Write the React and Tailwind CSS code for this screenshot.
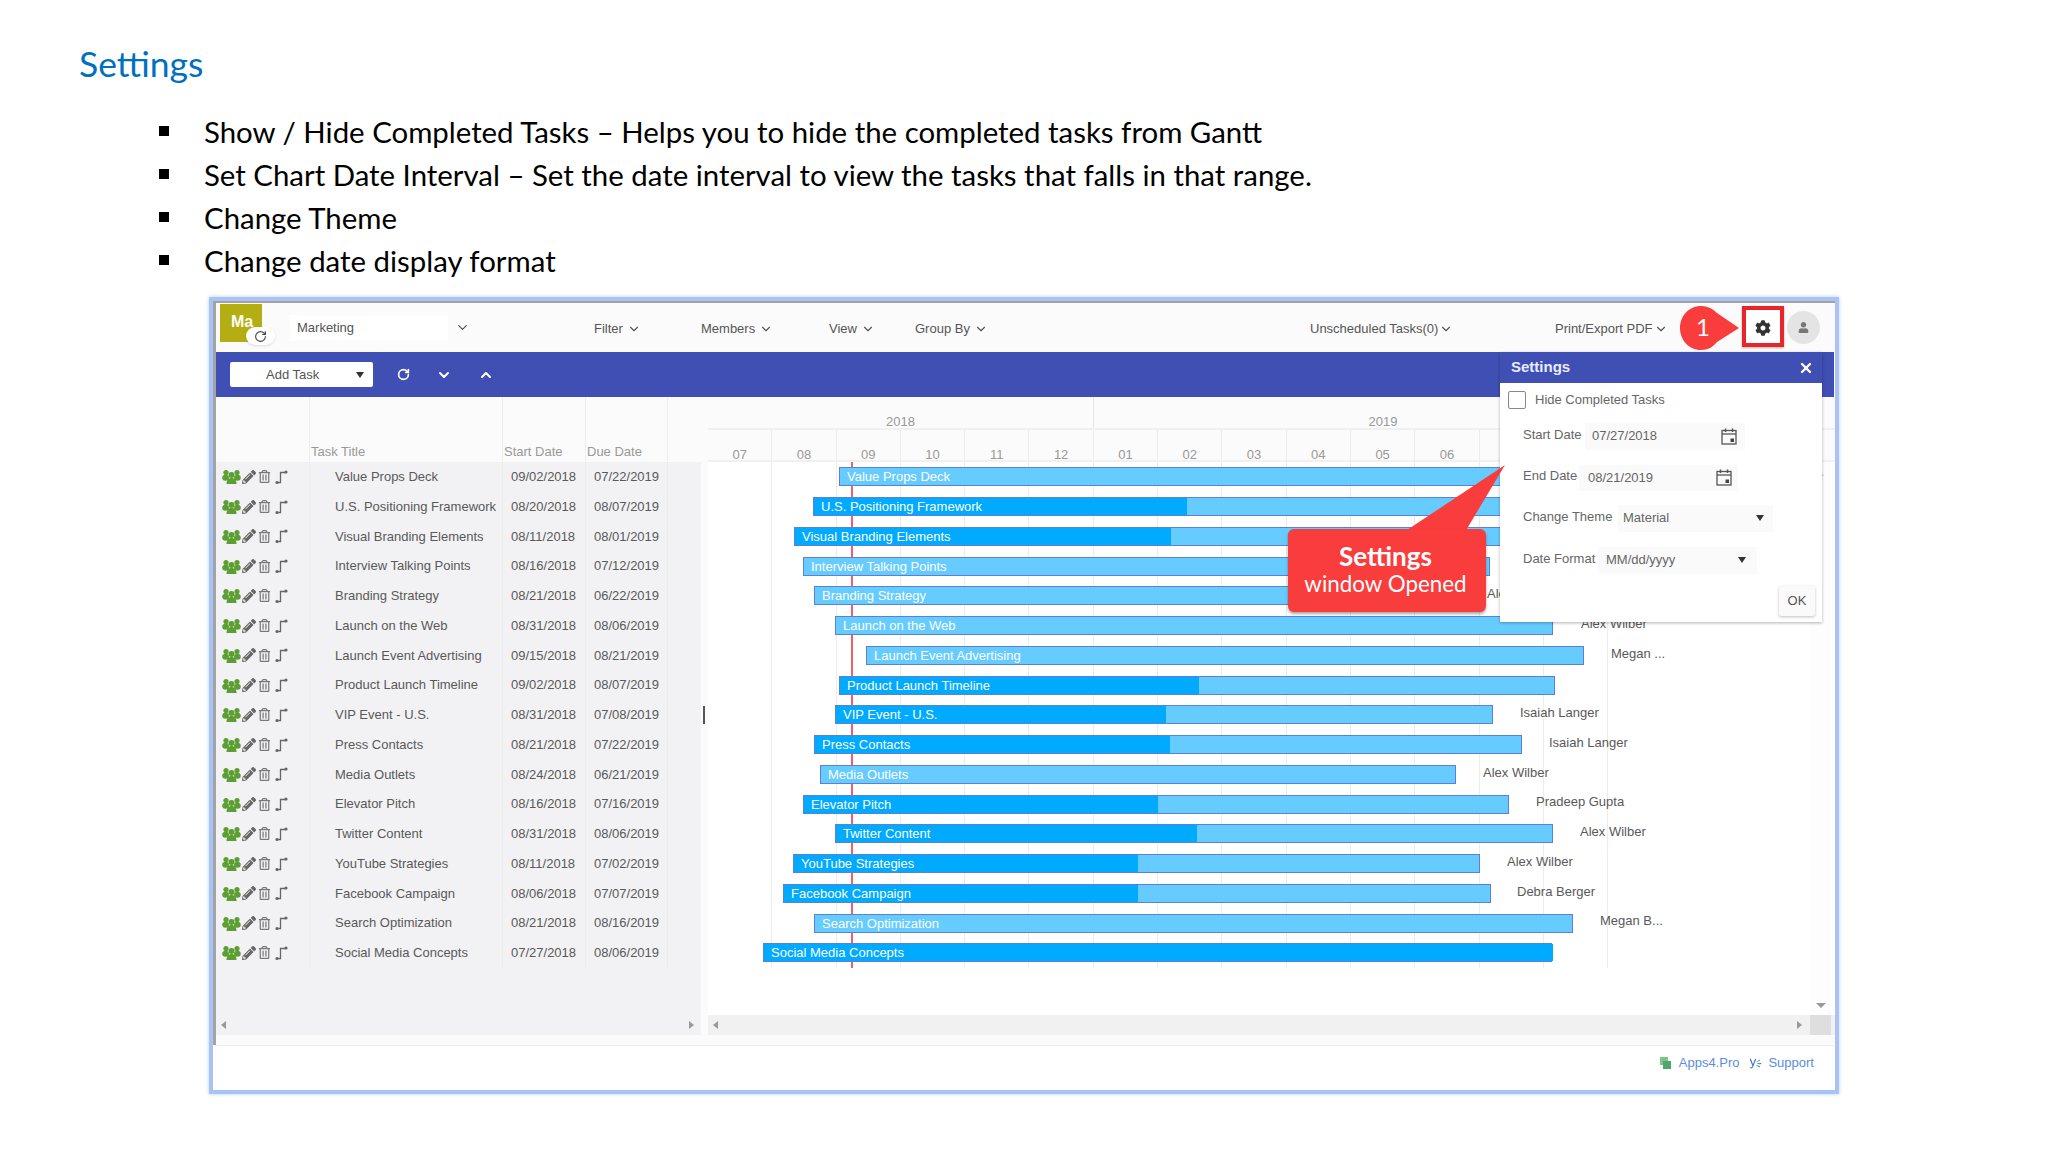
import { ChevronDown, ChevronUp, RotateCw, X } from 'lucide-react'
import { FaPencilAlt, FaRegTrashAlt, FaCog, FaUser, FaYammer } from 'react-icons/fa'

const bullets = [
  'Show / Hide Completed Tasks – Helps you to hide the completed tasks from Gantt',
  'Set Chart Date Interval – Set the date interval to view the tasks that falls in that range.',
  'Change Theme',
  'Change date display format',
]

// x values are page pixels, converted to chart offsets when rendered
const tasks = [
  { title: 'Value Props Deck', start: '09/02/2018', due: '07/22/2019', x: 839, end: 1520 },
  { title: 'U.S. Positioning Framework', start: '08/20/2018', due: '08/07/2019', x: 813, end: 1553, done: 1186 },
  { title: 'Visual Branding Elements', start: '08/11/2018', due: '08/01/2019', x: 794, end: 1536, done: 1170 },
  { title: 'Interview Talking Points', start: '08/16/2018', due: '07/12/2019', x: 803, end: 1490 },
  { title: 'Branding Strategy', start: '08/21/2018', due: '06/22/2019', x: 814, end: 1470, name: 'Alex Wilber', nameX: 1487 },
  { title: 'Launch on the Web', start: '08/31/2018', due: '08/06/2019', x: 835, end: 1553, name: 'Alex Wilber', nameX: 1581 },
  { title: 'Launch Event Advertising', start: '09/15/2018', due: '08/21/2019', x: 866, end: 1584, name: 'Megan ...', nameX: 1611 },
  { title: 'Product Launch Timeline', start: '09/02/2018', due: '08/07/2019', x: 839, end: 1555, done: 1198 },
  { title: 'VIP Event - U.S.', start: '08/31/2018', due: '07/08/2019', x: 835, end: 1493, done: 1165, name: 'Isaiah Langer', nameX: 1520 },
  { title: 'Press Contacts', start: '08/21/2018', due: '07/22/2019', x: 814, end: 1522, done: 1169, name: 'Isaiah Langer', nameX: 1549 },
  { title: 'Media Outlets', start: '08/24/2018', due: '06/21/2019', x: 820, end: 1456, name: 'Alex Wilber', nameX: 1483 },
  { title: 'Elevator Pitch', start: '08/16/2018', due: '07/16/2019', x: 803, end: 1509, done: 1157, name: 'Pradeep Gupta', nameX: 1536 },
  { title: 'Twitter Content', start: '08/31/2018', due: '08/06/2019', x: 835, end: 1553, done: 1196, name: 'Alex Wilber', nameX: 1580 },
  { title: 'YouTube Strategies', start: '08/11/2018', due: '07/02/2019', x: 793, end: 1480, done: 1137, name: 'Alex Wilber', nameX: 1507 },
  { title: 'Facebook Campaign', start: '08/06/2018', due: '07/07/2019', x: 783, end: 1491, done: 1137, name: 'Debra Berger', nameX: 1517 },
  { title: 'Search Optimization', start: '08/21/2018', due: '08/16/2019', x: 814, end: 1573, name: 'Megan B...', nameX: 1600 },
  { title: 'Social Media Concepts', start: '07/27/2018', due: '08/06/2019', x: 763, end: 1552, done: 1552 },
]

const months = ['07', '08', '09', '10', '11', '12', '01', '02', '03', '04', '05', '06', '07', '08', '09']
const chartLeft = 708

function Menu({ label, w, gap = 'gap-1' }) {
  return (
    <div className={`flex items-center mt-[3px] text-[13px] text-[#555] ${gap} ${w}`}>
      {label} <ChevronDown size={14} strokeWidth={2} />
    </div>
  )
}

function PeopleIcon() {
  return (
    <svg width="19" height="15" viewBox="0 0 19 15" fill="#5c9e31" className="shrink-0">
      <circle cx="4" cy="3.5" r="2.6" />
      <circle cx="15" cy="3.5" r="2.6" />
      <ellipse cx="3.6" cy="8.8" rx="3.4" ry="3" />
      <ellipse cx="15.4" cy="8.8" rx="3.4" ry="3" />
      <circle cx="9.5" cy="6" r="3" />
      <path d="M4.5 15C4.5 11 6.5 9 9.5 9S14.5 11 14.5 15Z" />
    </svg>
  )
}

function RouteIcon() {
  return (
    <svg width="13" height="16" viewBox="0 0 13 16" className="shrink-0">
      <circle cx="2" cy="13.5" r="1.6" fill="#666" />
      <path d="M2 13.5H5.5V3.5H11" fill="none" stroke="#666" strokeWidth="1.3" />
      <circle cx="11" cy="3" r="1.6" fill="#666" />
    </svg>
  )
}

function CalendarIcon() {
  return (
    <svg width="16" height="17" viewBox="0 0 16 17" className="shrink-0">
      <rect x="1" y="2.5" width="14" height="13.5" fill="none" stroke="#555" strokeWidth="1.3" />
      <path d="M1 6H15" stroke="#555" strokeWidth="1.3" />
      <path d="M4.5 0.5V4M11.5 0.5V4" stroke="#555" strokeWidth="1.5" />
      <rect x="9.5" y="10.5" width="3.5" height="3.5" fill="#444" />
    </svg>
  )
}

function Field({ label, labelW, box, children }) {
  return (
    <div className={`flex items-center pl-[23px] ${box.mt}`}>
      <div className={`text-[13px] text-[#666] mb-[3px] ${labelW}`}>{label}</div>
      <div className={`flex items-center justify-between bg-[#fafafa] text-[13px] text-[#666] ${box.cls}`}>{children}</div>
    </div>
  )
}

function Caret() {
  return <div className="w-0 h-0 border-x-[4px] border-x-transparent border-t-[6px] border-t-[#333]" />
}

export default function App() {
  return (
    <div className="w-[2048px] h-[1152px] bg-white overflow-hidden font-['Liberation_Sans',Arial,sans-serif]">
      <h1 className="pl-[79px] pt-[44px] text-[35.5px] leading-[40px] text-[#0070c0] font-[Lato,sans-serif]">Settings</h1>
      <ul className="mt-[26px] font-[Lato,sans-serif] text-[29.4px] leading-[43px] text-black">
        {bullets.map((b) => (
          <li key={b} className="flex items-center pl-[159px]">
            <span className="w-[10px] h-[10px] bg-black mr-[35px] mb-[2px]" />
            {b}
          </li>
        ))}
      </ul>

      <div className="relative mt-[15px] ml-[209px] w-[1630px] h-[797px] border-[4px] border-[#a9c4f4] shadow-[0_0_4px_#b9cff7] bg-white">
        <div className="h-[744px] border-t-2 border-l-[3px] border-[#a3a3a3] bg-[#fbfbfb] flex flex-col">
          {/* top menu */}
          <div className="h-[49px] flex items-center shrink-0">
            <div className="relative ml-[4px] mb-[9px] w-[42px] h-[38px] bg-[#b5ae12] text-white font-bold text-[16px] pl-[11px] pt-[8px] leading-[20px]">
              Ma
              <div className="absolute left-[26px] top-[23px] w-[29px] h-[18px] rounded-full bg-white shadow flex items-center justify-center text-[#444]">
                <RotateCw size={13} />
              </div>
            </div>
            <div className="ml-[28px] mt-[1px] w-[158px] h-[26px] bg-white pl-[7px] text-[13px] leading-[26px] text-[#555]">Marketing</div>
            <ChevronDown size={15} strokeWidth={2} className="ml-[7px] mb-[1px] text-[#555]" />
            <div className="w-[124px]" />
            <Menu label="Filter" w="w-[107px]" />
            <Menu label="Members" w="w-[128px]" />
            <Menu label="View" w="w-[86px]" />
            <Menu label="Group By" w="w-[395px]" />
            <Menu label="Unscheduled Tasks(0)" w="w-[245px]" gap="gap-[1px]" />
            <Menu label="Print/Export PDF" w="w-[187px]" gap="gap-[1px]" />
            <div className="w-[42px] h-[41px] bg-white flex items-center justify-center text-[#333]">
              <FaCog size={16} />
            </div>
            <div className="ml-[3px] w-[33px] h-[33px] rounded-full bg-[#e4e4e4] flex items-center justify-center text-[#777]">
              <FaUser size={11} />
            </div>
          </div>

          {/* blue toolbar */}
          <div className="h-[45px] mr-[1px] shrink-0 bg-[#3f4fb3] flex items-center pl-[14px] text-white">
            <div className="w-[143px] h-[25px] bg-white rounded-[2px] flex items-center text-[13px] text-[#555]">
              <span className="ml-[36px] w-[90px]">Add Task</span>
              <Caret />
            </div>
            <RotateCw size={13} strokeWidth={3} className="ml-[24px]" />
            <ChevronDown size={16} strokeWidth={3} className="ml-[26px]" />
            <ChevronUp size={16} strokeWidth={3} className="ml-[26px]" />
          </div>

          <div className="flex h-[638px] shrink-0">
            {/* task table */}
            <div className="w-[485px] flex flex-col shrink-0 text-[13px]">
              <div className="h-[65px] flex items-end pb-[1px] text-[#999]">
                <div className="w-[94px] h-full border-r border-[#eee]" />
                <div className="w-[193px] h-full border-r border-[#eee] flex items-end pl-px">Task Title</div>
                <div className="w-[83px] h-full border-r border-[#eee] flex items-end pl-px">Start Date</div>
                <div className="w-[82px] h-full border-r border-[#eee] flex items-end pl-px">Due Date</div>
              </div>
              <div className="flex-1 bg-[#f2f2f4] flex flex-col text-[#595959]">
                {tasks.map((t) => (
                  <div key={t.title} className="h-[29.75px] flex items-center">
                    <div className="w-[94px] h-full border-r border-[#ececec] flex items-center pl-[6px] shrink-0">
                      <PeopleIcon />
                      <FaPencilAlt size={14} className="text-[#666] ml-[1px] shrink-0" />
                      <FaRegTrashAlt size={13} className="text-[#777] ml-[2px] shrink-0" />
                      <span className="ml-[4px]"><RouteIcon /></span>
                    </div>
                    <div className="w-[193px] h-full border-r border-[#ececec] flex items-center pl-[25px] whitespace-nowrap shrink-0">{t.title}</div>
                    <div className="w-[83px] h-full border-r border-[#ececec] flex items-center pl-[8px] shrink-0">{t.start}</div>
                    <div className="w-[82px] h-full border-r border-[#ececec] flex items-center pl-[8px] shrink-0">{t.due}</div>
                  </div>
                ))}
                <div className="flex-1" />
                <div className="h-[20px] flex items-center justify-between px-[5px] mr-[2px]">
                  <div className="w-0 h-0 border-y-[4px] border-y-transparent border-r-[5px] border-r-[#999]" />
                  <div className="w-0 h-0 border-y-[4px] border-y-transparent border-l-[5px] border-l-[#999]" />
                </div>
              </div>
            </div>

            <div className="w-[7px] flex items-center shrink-0">
              <div className="w-[2px] h-[18px] bg-[#555] ml-[2px] mt-[-2px]" />
            </div>

            {/* gantt */}
            <div className="flex-1 flex flex-col min-w-0">
              <div className="h-[65px] shrink-0 text-[13px] text-[#999] overflow-hidden">
                <div className="h-[33px] flex border-b-2 border-[#f0f0f0]">
                  <div className="w-[386px] shrink-0 border-r border-[#e6e6e6] text-center pt-[18px] leading-[14px]">2018</div>
                  <div className="w-[578px] shrink-0 text-center pt-[18px] leading-[14px]">2019</div>
                </div>
                <div className="h-[32px] flex border-b-2 border-[#f0f0f0]">
                  {months.map((m, i) => (
                    <div key={i} className="w-[64.3px] shrink-0 border-r border-[#ececec] text-center pt-[18px] leading-[14px]">{m}</div>
                  ))}
                </div>
              </div>
              <div className="flex-1 relative bg-white">
                {/* gridlines under the bars */}
                <div className="absolute left-0 top-0 h-[506px] flex">
                  {months.slice(0, 14).map((m, i) => (
                    <div key={i} className="w-[64.3px] border-r border-[#ececec]" />
                  ))}
                </div>
                <div className="absolute left-[143px] top-0 h-[506px] w-[2px] bg-[#f0606c]" />
                <div className="relative flex flex-col">
                  {tasks.map((t) => (
                    <div key={t.title} className="h-[29.75px] flex items-center whitespace-nowrap">
                      <div
                        className="relative h-[19px] bg-[#66ccff] border border-[#5b80d8] shrink-0"
                        style={{ marginLeft: t.x - chartLeft, width: t.end - t.x }}
                      >
                        {t.done && (
                          <div className="absolute left-0 top-0 bottom-0 bg-[#00aaff]" style={{ width: t.done - t.x }} />
                        )}
                        <div className="relative pl-[7px] text-[13px] leading-[18px] text-white">{t.title}</div>
                      </div>
                      {t.name && (
                        <div className="text-[13px] text-[#595959] mb-[4px]" style={{ marginLeft: t.nameX - t.end }}>{t.name}</div>
                      )}
                    </div>
                  ))}
                </div>
                {/* vertical scrollbar */}
                <div className="absolute right-[4px] top-0 bottom-0 w-[21px] bg-[#fdfdfd] flex flex-col items-center justify-between pt-[10px] pb-[7px]">
                  <div className="w-0 h-0 border-x-[3px] border-x-transparent border-b-[4px] border-b-[#ccc]" />
                  <div className="w-0 h-0 border-x-[5px] border-x-transparent border-t-[5px] border-t-[#999]" />
                </div>
              </div>
              <div className="h-[20px] shrink-0 bg-[#f1f1f2] flex items-center justify-between pl-[5px]">
                <div className="w-0 h-0 border-y-[4px] border-y-transparent border-r-[5px] border-r-[#999]" />
                <div className="flex items-center h-full">
                  <div className="w-0 h-0 border-y-[4px] border-y-transparent border-l-[5px] border-l-[#999] mr-[8px]" />
                  <div className="w-[21px] h-full bg-[#dedede] mr-[4px]" />
                </div>
              </div>
            </div>
          </div>
        </div>

        {/* footer */}
        <div className="h-[45px] mr-[1px] border-t border-[#ececec] ml-px flex items-center justify-end pr-[20px] text-[13px] text-[#5b8de0] pb-[10px]">
          <svg width="13" height="14" viewBox="0 0 13 14" className="mr-[4px]">
            <rect x="1" y="1" width="8" height="8" fill="#7fc28a" />
            <rect x="4" y="5" width="8" height="8" fill="#4fa86a" />
          </svg>
          <span className="ml-[3px]">Apps4.Pro</span>
          <FaYammer size={13} className="ml-[10px] text-[#3f73c9]" />
          <span className="ml-[6px]">Support</span>
        </div>

        {/* settings popup */}
        <div className="absolute left-[1287px] top-[51px] w-[322px] h-[270px] bg-white shadow-[0_1px_3px_rgba(0,0,0,0.3)] flex flex-col">
          <div className="h-[31px] shrink-0 bg-[#3f4fb3] flex items-center justify-between pl-[11px] pr-[8px] text-white">
            <span className="text-[15px] font-bold text-[#e8ecff]">Settings</span>
            <X size={16} strokeWidth={3.5} />
          </div>
          <div className="flex items-center mt-[7px] pl-[8px] text-[13px] text-[#666]">
            <div className="w-[18px] h-[18px] border border-[#888] rounded-[2px] mr-[9px]" />
            Hide Completed Tasks
          </div>
          <Field label="Start Date" labelW="w-[62px]" box={{ mt: 'mt-[13px]', cls: 'w-[160px] h-[27px] pl-[7px] pr-[8px]' }}>
            07/27/2018 <CalendarIcon />
          </Field>
          <Field label="End Date" labelW="w-[56px]" box={{ mt: 'mt-[15px]', cls: 'w-[159px] h-[26px] pl-[9px] pr-[6px]' }}>
            08/21/2019 <CalendarIcon />
          </Field>
          <Field label="Change Theme" labelW="w-[95px]" box={{ mt: 'mt-[14px]', cls: 'w-[155px] h-[27px] pl-[5px] pr-[9px]' }}>
            Material <Caret />
          </Field>
          <Field label="Date Format" labelW="w-[75px]" box={{ mt: 'mt-[15px]', cls: 'w-[159px] h-[27px] pl-[8px] pr-[11px]' }}>
            MM/dd/yyyy <Caret />
          </Field>
          <div className="self-end mt-[12px] mr-[7px] w-[36px] h-[30px] bg-[#fafafa] shadow-[0_1px_3px_rgba(0,0,0,0.25)] rounded-[2px] flex items-center justify-center text-[13px] text-[#555]">OK</div>
        </div>

        {/* red annotations */}
        <svg width="115" height="75" viewBox="0 0 115 75" className="absolute left-[1182px] top-[159px]">
          <polygon points="9,72 110,5 70,72" fill="#f93c3c" />
        </svg>
        <div className="absolute left-[1075px] top-[228px] w-[198px] h-[83px] rounded-[6px] bg-[#f93c3c] shadow-[0_2px_3px_rgba(0,0,0,0.35)] text-white text-center font-[Lato,sans-serif] pt-[13px] pr-[3px]">
          <div className="font-bold text-[26px] leading-[28px]">Settings</div>
          <div className="text-[22.4px] leading-[27px]">window Opened</div>
        </div>
        <div className="absolute left-[1529px] top-[5px] w-[42px] h-[41px] border-[4px] border-[#e8262a] shadow-[0_1px_2px_rgba(0,0,0,0.3)]" />
        <svg width="66" height="48" viewBox="0 0 66 48" className="absolute left-[1464px] top-[3px]">
          <path d="M24 2C31 2 36 5 40 9L62 24L40 38C36 43 31 46 24 46C12 46 3 36 3 24C3 12 12 2 24 2Z" fill="#f93c3c" />
        </svg>
        <div className="absolute left-[1483px] top-[8px] text-white text-[24px] leading-[36px] font-[Lato,sans-serif]">1</div>
      </div>
    </div>
  )
}
